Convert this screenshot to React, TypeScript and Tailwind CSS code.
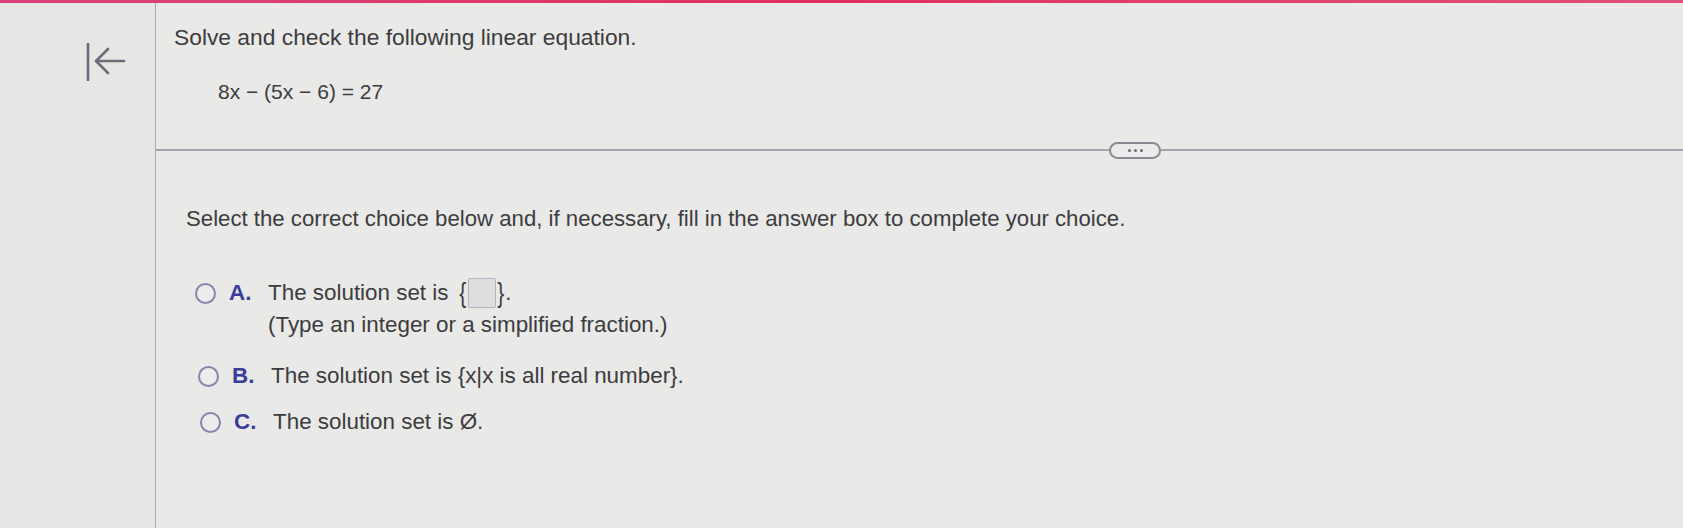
import React from "react";

function Radio() {
  return <div className="w-[21px] h-[21px] rounded-full border-[2px] border-[#8486ad] bg-[#ececec] shrink-0" />;
}

export default function App() {
  return (
    <div
      className="w-[1683px] h-[528px] overflow-hidden bg-[#e6e6e4] text-[#3c3c40]"
      style={{ fontFamily: '"Liberation Sans", Arial, sans-serif' }}
    >
      <div className="h-[3px] bg-gradient-to-r from-[#d9437a] via-[#e0305f] to-[#e0507a]" />
      <div className="flex h-[525px]">
        <div className="w-[156px] shrink-0 border-r border-[#a7a7ad] pl-[86px] pt-[40px]">
          <svg width="40" height="38" viewBox="0 0 40 38" fill="none" stroke="#6d6a79" strokeWidth="2.6" strokeLinecap="round" strokeLinejoin="round">
            <line x1="2" y1="1" x2="2" y2="37" />
            <line x1="10" y1="18" x2="38" y2="18" />
            <polyline points="22,6 10,18 22,30" />
          </svg>
        </div>
        <div className="flex-1 flex flex-col bg-[#e9e9e7]">
          <div className="pl-[18px] mt-[21px] text-[22.8px] leading-[26px]">Solve and check the following linear equation.</div>
          <div className="pl-[62px] mt-[30px] text-[21px] leading-[24px]">8x − (5x − 6) = 27</div>
          <div className="mt-[37px] h-[18px] flex items-center">
            <div className="w-[953px] h-[2px] bg-[#a4a4ac]" />
            <div className="w-[52px] h-[17px] rounded-full border-[2px] border-[#8a8a94] bg-[#ebebeb] flex items-center justify-center gap-[3px]">
              <span className="w-[3px] h-[3px] rounded-full bg-[#6a6a74]" />
              <span className="w-[3px] h-[3px] rounded-full bg-[#6a6a74]" />
              <span className="w-[3px] h-[3px] rounded-full bg-[#6a6a74]" />
            </div>
            <div className="flex-1 h-[2px] bg-[#a4a4ac]" />
          </div>
          <div className="pl-[30px] mt-[47px] text-[22.2px] leading-[26px]">
            Select the correct choice below and, if necessary, fill in the answer box to complete your choice.
          </div>
          <div className="pl-[39px] mt-[46px] text-[22.4px] leading-[26px]">
            <div className="flex items-center h-[30px]">
              <Radio />
              <span className="ml-[13px] w-[39px] font-bold text-[#3a3d97]">A.</span>
              <span>The solution set is</span>
              <span className="ml-[10px] flex items-center">
                <span className="text-[28px] leading-[30px] scale-x-75">{"{"}</span>
                <span className="w-[28px] h-[30px] border border-[#b3b3c2] bg-[#dedede] rounded-[2px]" />
                <span className="text-[28px] leading-[30px] scale-x-75">{"}"}</span>
                <span>.</span>
              </span>
            </div>
            <div className="pl-[73px] mt-[4px]">(Type an integer or a simplified fraction.)</div>
            <div className="flex items-center mt-[25px] pl-[3px]">
              <Radio />
              <span className="ml-[13px] w-[39px] font-bold text-[#3a3d97]">B.</span>
              <span>The solution set is {"{"}x|x is all real number{"}"}.</span>
            </div>
            <div className="flex items-center mt-[20px] pl-[5px]">
              <Radio />
              <span className="ml-[13px] w-[39px] font-bold text-[#3a3d97]">C.</span>
              <span>The solution set is Ø.</span>
            </div>
          </div>
        </div>
      </div>
    </div>
  );
}
